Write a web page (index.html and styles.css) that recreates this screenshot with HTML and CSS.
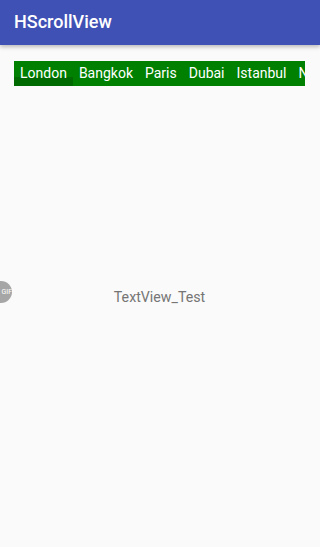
FILE: index.html
```html
<!DOCTYPE html>
<html>
<head>
<meta charset="utf-8">
<link rel="stylesheet" href="styles.css">
</head>
<body>
<div class="screen">
  <header class="appbar"><span class="title">HScrollView</span></header>
  <div class="content">
    <div class="hscroll">
      <div class="items">
        <span class="item active">London</span>
        <span class="item">Bangkok</span>
        <span class="item">Paris</span>
        <span class="item">Dubai</span>
        <span class="item">Istanbul</span>
        <span class="item">New York</span>
      </div>
    </div>
    <div class="center"><span class="tv">TextView_Test</span></div>
  </div>
  <div class="gif">GIF</div>
</div>
</body>
</html>
```
FILE: styles.css
```css
html, body { margin: 0; padding: 0; }
body { font-family: Roboto, "Noto Sans", sans-serif; background: #fafafa; }
.screen { position: relative; width: 320px; height: 547px; overflow: hidden; display: flex; flex-direction: column; }
.appbar { height: 45px; background: #3f51b5; display: flex; align-items: center; padding-left: 14px; box-shadow: 0 2px 4px rgba(0,0,0,0.25); position: relative; z-index: 1; flex-shrink: 0; }
.title { color: #fff; font-size: 18px; font-weight: 500; margin-top: -2px; }
.content { flex: 1; display: grid; grid-template: 1fr / 1fr; }
.hscroll { grid-area: 1 / 1; align-self: start; margin: 16px 15px 0 14px; height: 25px; background: #008000; overflow: hidden; }
.items { display: flex; height: 25px; white-space: nowrap; }
.item { color: #fff; font-size: 14px; line-height: 25px; padding: 0 6px; }
.item.active { background: linear-gradient(to bottom, transparent 16px, #006a00 16px); }
.center { grid-area: 1 / 1; display: flex; align-items: center; justify-content: center; padding-top: 2px; }
.tv { color: #757575; font-size: 14.2px; margin-right: 1px; }
.gif { position: absolute; left: -10px; top: 281px; width: 22px; height: 22px; border-radius: 50%; background: #a6a6a6; color: #fff; font-size: 7px; line-height: 22px; text-align: right; box-sizing: border-box; }
```
